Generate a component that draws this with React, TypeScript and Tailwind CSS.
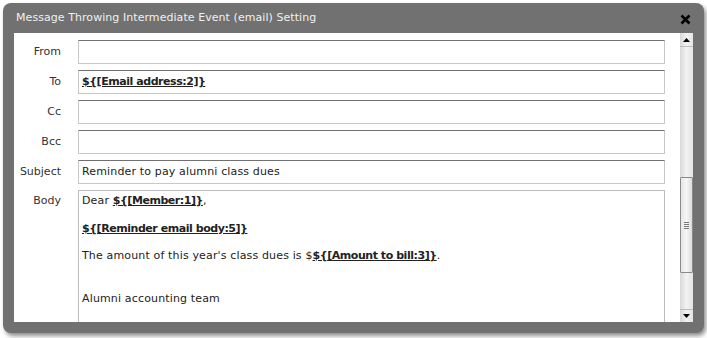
const font = { fontFamily: '"DejaVu Sans", Verdana, sans-serif' };

function Tag({ children }: { children: React.ReactNode }) {
  return <span className="font-bold tracking-[-0.45px] underline">{children}</span>;
}

function Row({ label, value }: { label: string; value?: React.ReactNode }) {
  return (
    <div className="flex items-center">
      <div className="w-[47px] shrink-0 text-right text-[11px] text-[#333]">{label}</div>
      <div className="ml-[17px] flex h-[24px] w-[587px] items-center border border-[#c8c8c8] border-t-[#707070] bg-white px-[3px] text-[11px] tracking-[0.15px] text-[#222]">
        {value}
      </div>
    </div>
  );
}

export default function App() {
  return (
    <div className="h-[338px] w-[707px] bg-white pl-[3px] pt-[3px]" style={font}>
      <div className="flex h-[330px] w-[701px] flex-col rounded-[8px] bg-[#717171] shadow-[2px_3px_4px_rgba(0,0,0,0.45)]">
        <div className="flex h-[30px] items-center justify-between pl-[13px] pr-[13px]">
          <span className="pt-[1px] text-[11px] tracking-[0.06px] text-[#f0f0f0]">
            Message Throwing Intermediate Event (email) Setting
          </span>
          <svg width="11" height="11" viewBox="0 0 11 11" className="mt-[2px]">
            <path d="M1.5 1.5 L9.5 9.5 M9.5 1.5 L1.5 9.5" stroke="#000" strokeWidth="2.6" />
          </svg>
        </div>
        <div className="ml-[11px] flex h-[289px]">
          <div className="h-full w-[666px] overflow-hidden bg-white pt-[7px]">
            <div className="flex flex-col gap-[6px]">
              <Row label="From" />
              <Row label="To" value={<Tag>{"${[Email address:2]}"}</Tag>} />
              <Row label="Cc" />
              <Row label="Bcc" />
              <Row label="Subject" value="Reminder to pay alumni class dues" />
              <div className="flex items-start">
                <div className="w-[47px] shrink-0 pt-[3px] text-right text-[11px] text-[#333]">Body</div>
                <div className="ml-[17px] h-[170px] w-[587px] shrink-0 border border-[#bbb] px-[3px] pt-[3px] text-[11px] leading-[14px] tracking-[0.15px] text-[#222]">
                  <p>
                    Dear <Tag>{"${[Member:1]}"}</Tag>,
                  </p>
                  <p className="mt-[14px]">
                    <Tag>{"${[Reminder email body:5]}"}</Tag>
                  </p>
                  <p className="mt-[13px]">
                    The amount of this year's class dues is $<Tag>{"${[Amount to bill:3]}"}</Tag>.
                  </p>
                  <p className="mt-[29px]">Alumni accounting team</p>
                </div>
              </div>
            </div>
          </div>
          <div className="flex h-full w-[13px] flex-col bg-gradient-to-r from-[#d8d8d8] via-[#f2f2f2] to-[#e4e4e4]">
            <div className="flex h-[14px] items-center justify-center border-b border-[#bdbdbd]">
              <svg width="7" height="4" viewBox="0 0 7 4">
                <path d="M0 4 L3.5 0 L7 4 Z" fill="#000" />
              </svg>
            </div>
            <div className="h-[130px]" />
            <div className="flex h-[96px] items-center justify-center rounded-[1px] border border-[#8a8a8a] bg-gradient-to-r from-[#e6e6e6] via-[#f6f6f6] to-[#dcdcdc]">
              <div className="flex flex-col gap-[1px]">
                <div className="h-[1px] w-[5px] bg-[#777]" />
                <div className="h-[1px] w-[5px] bg-[#777]" />
                <div className="h-[1px] w-[5px] bg-[#777]" />
                <div className="h-[1px] w-[5px] bg-[#777]" />
              </div>
            </div>
            <div className="flex-1" />
            <div className="flex h-[13px] items-center justify-center border-t border-[#bdbdbd]">
              <svg width="7" height="4" viewBox="0 0 7 4">
                <path d="M0 0 L7 0 L3.5 4 Z" fill="#000" />
              </svg>
            </div>
          </div>
        </div>
      </div>
    </div>
  );
}
